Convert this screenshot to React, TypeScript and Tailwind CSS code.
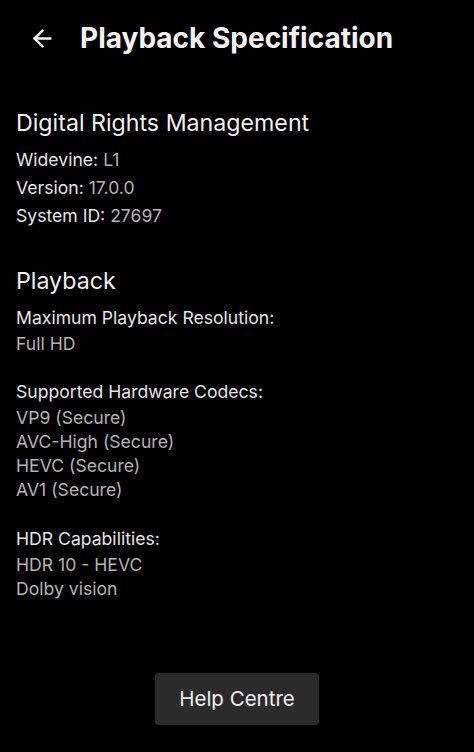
import { ArrowLeft } from "lucide-react";

const font = { fontFamily: "Inter, 'Noto Sans', sans-serif" };

function Row({ label, value }: { label: string; value: string }) {
  return (
    <div className="h-[28px] leading-[28px] text-[17.6px]">
      <span className="text-[#e6e6e6]">{label}: </span>
      <span className="text-[#b3b3b3]">{value}</span>
    </div>
  );
}

function Group({ label, values, gap }: { label: string; values: string[]; gap: string }) {
  return (
    <div className={gap}>
      <div className="h-[26px] leading-[26px] text-[17.6px] text-[#e6e6e6]">{label}:</div>
      <div className="mt-[1px]">
        {values.map((v) => (
          <div key={v} className="h-[24px] leading-[24px] text-[17.6px] text-[#b3b3b3]">
            {v}
          </div>
        ))}
      </div>
    </div>
  );
}

export default function App() {
  return (
    <div className="w-[474px] h-[752px] bg-black flex flex-col" style={font}>
      {/* header */}
      <div className="h-[76px] flex items-center pl-[29px]">
        <ArrowLeft className="w-[27px] h-[27px] text-[#f2f2f2]" strokeWidth={2.2} />
        <h1 className="ml-[24px] text-[28px] font-bold text-[#f2f2f2]">
          Playback Specification
        </h1>
      </div>

      {/* DRM */}
      <div className="px-4 mt-[32px]">
        <h2 className="h-[30px] leading-[30px] text-[23.2px] text-[#f2f2f2]">Digital Rights Management</h2>
        <div className="mt-[8px]">
          <Row label="Widevine" value="L1" />
          <Row label="Version" value="17.0.0" />
          <Row label="System ID" value="27697" />
        </div>
      </div>

      {/* Playback */}
      <div className="px-4 mt-[36px]">
        <h2 className="h-[30px] leading-[30px] text-[23.2px] text-[#f2f2f2]">Playback</h2>
        <Group gap="mt-[9px]" label="Maximum Playback Resolution" values={["Full HD"]} />
        <Group
          gap="mt-[23px]"
          label="Supported Hardware Codecs"
          values={["VP9 (Secure)", "AVC-High (Secure)", "HEVC (Secure)", "AV1 (Secure)"]}
        />
        <Group gap="mt-[24px]" label="HDR Capabilities" values={["HDR 10 - HEVC", "Dolby vision"]} />
      </div>

      <div className="flex justify-center mt-[72px]">
        <button className="w-[164px] h-[52px] rounded-[4px] bg-[#2b2b2b] text-[20.5px] text-[#f2f2f2]">
          Help Centre
        </button>
      </div>
    </div>
  );
}
